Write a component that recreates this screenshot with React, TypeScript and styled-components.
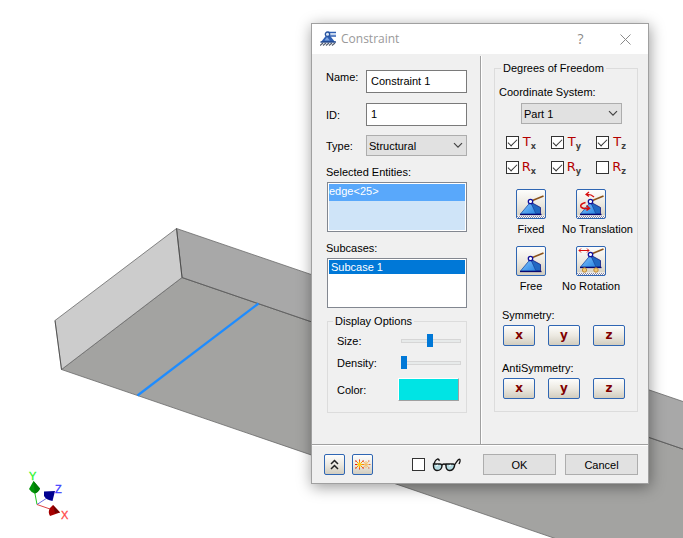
import React, { useState } from "react";
import styled, { createGlobalStyle, css } from "styled-components";

const GlobalStyle = createGlobalStyle`
  * { box-sizing: border-box; }
  body { margin: 0; background: #fff; }
  body, button, input, select {
    font-family: Tahoma, "Liberation Sans", sans-serif;
    font-size: 11px;
    line-height: 14px;
    color: #000;
  }
`;

const Stage = styled.main`
  position: relative;
  min-height: 100vh;
  display: flex;
  justify-content: flex-end;
  align-items: flex-start;
  padding: 23px 34px;
  overflow: hidden;
`;

const SceneSvg = styled.svg`
  position: absolute;
  inset: 0;
  width: 100%;
  height: 100%;
`;

const Dialog = styled.section`
  position: relative;
  background: #f0f0f0;
  border: 1px solid #a0a0a0;
  box-shadow: 1px 3px 14px rgba(0, 0, 0, 0.4);
`;

const TitleBar = styled.header`
  display: flex;
  align-items: center;
  height: 30px;
  padding: 0 0 0 8px;
  background: #fff;
`;

const Title = styled.h1`
  flex: 1;
  margin: 0 0 0 4px;
  font: 400 12px/16px "Open Sans", sans-serif;
  color: #999;
`;

const TitleButton = styled.button`
  width: 45px;
  height: 28px;
  padding: 0;
  border: 0;
  background: none;
  color: #8a8a8a;
  font: 400 14px/28px "Open Sans", sans-serif;

  svg { display: block; margin: auto; }
`;

const Columns = styled.div`
  display: flex;
  padding-top: 2px;
`;

const LeftColumn = styled.div`
  width: 168px;
  padding: 14px 13px 31px 14px;
`;

const RightColumn = styled.div`
  width: 166px;
  padding: 5px 10px 0 12px;
`;

const Divider = styled.div`
  width: 2px;
  border-left: 1px solid #a0a0a0;
  background: #fff;
`;

const Field = styled.div<{ $top?: boolean; $gap?: number }>`
  display: grid;
  grid-template-columns: 40px 1fr;
  align-items: ${(p) => (p.$top ? "start" : "center")};
  margin-top: ${(p) => p.$gap ?? 0}px;
`;

const TextInput = styled.input`
  width: 100%;
  height: 23px;
  padding: 0 4px 2px;
  border: 1px solid #7a7a7a;
  border-radius: 0;
  background: #fff;
`;

const SelectBox = styled.div<{ $indent?: boolean }>`
  position: relative;
  ${(p) => p.$indent && css`margin: 4px 11px 0 22px;`}

  svg {
    position: absolute;
    right: 4px;
    top: 7px;
    pointer-events: none;
  }
`;

const Select = styled.select`
  display: block;
  width: 100%;
  height: 21px;
  padding: 0 18px 0 2px;
  border: 1px solid #adadad;
  border-radius: 0;
  background: #e1e1e1;
  appearance: none;
`;

const SectionLabel = styled.div<{ $gap?: number }>`
  margin-top: ${(p) => p.$gap ?? 9}px;
  white-space: nowrap;
`;

const ListBox = styled.ul<{ $tint?: boolean }>`
  height: 50px;
  margin: 3px 0 0 1px;
  padding: 1px;
  list-style: none;
  border: 1px solid #828790;
  background: ${(p) => (p.$tint ? "#cfe4f8" : "#fff")};
  box-shadow: inset 0 0 0 1px #fff;
`;

const ListItem = styled.li<{ $tint?: boolean }>`
  height: ${(p) => (p.$tint ? 17 : 14)}px;
  padding-left: ${(p) => (p.$tint ? 0 : 2)}px;
  background: ${(p) => (p.$tint ? "#59a8fb" : "#0078d7")};
  color: #fff;
`;

const Group = styled.fieldset<{ $wide?: boolean }>`
  min-width: 0;
  margin: ${(p) => (p.$wide ? "0" : "6px 0 0 1px")};
  padding: ${(p) => (p.$wide ? "10px 4px 12px" : "6px 5px 11px 9px")};
  border: 1px solid #dcdcdc;
`;

const Legend = styled.legend<{ $wide?: boolean }>`
  margin-left: ${(p) => (p.$wide ? 2 : -4)}px;
  padding: 0 2px;
  white-space: nowrap;
`;

const OptionRow = styled.div`
  display: flex;
  justify-content: space-between;
  align-items: center;
  margin-bottom: 8px;
  &:last-child { margin-bottom: 0; }
`;

const Slider = styled.input`
  width: 60px;
  height: 14px;
  margin: 0;
  background: none;
  appearance: none;

  &::-webkit-slider-runnable-track {
    height: 4px;
    border: 1px solid #d6d6d6;
    background: #e7eaea;
  }
  &::-webkit-slider-thumb {
    appearance: none;
    width: 6px;
    height: 13px;
    margin: -6px -1px 0;
    background: #0078d7;
  }
`;

const ColorButton = styled.button`
  width: 61px;
  height: 23px;
  margin-right: 2px;
  padding: 0;
  border: 1px solid;
  border-color: #fff #a0a0a0 #a0a0a0 #fff;
  background: #00e4e4;
`;

const FreedomGrid = styled.div`
  display: grid;
  grid-template-columns: repeat(3, 45px);
  gap: 12px 0;
  margin: 12px 0 0 7px;
`;

const FreedomLabel = styled.label`
  display: flex;
  align-items: center;
  height: 13px;
  gap: 1px;
`;

const FreedomName = styled.span`
  width: 16px;
  display: flex;
  justify-content: flex-end;
  font: 400 13px/18px "DejaVu Sans", sans-serif;
  color: #b40000;

  sub {
    font: 700 9px/12px "DejaVu Sans Condensed", "DejaVu Sans", sans-serif;
    color: #404040;
    padding-top: 7px;
  }
`;

const Check = styled.input`
  flex: none;
  width: 13px;
  height: 13px;
  margin: 0;
  border: 1px solid #333;
  background: #fff;
  appearance: none;

  &:checked::before {
    content: "";
    display: block;
    width: 8px;
    height: 4px;
    margin: 2px 0 0 1px;
    border: solid #333;
    border-width: 0 0 1px 1px;
    transform: rotate(-45deg);
  }
`;

const PresetGrid = styled.div`
  display: grid;
  grid-template-columns: 46px auto;
  gap: 10px 0;
  margin: 15px 0 0 17px;
`;

const Preset = styled.div<{ $offset?: boolean }>`
  display: flex;
  flex-direction: column;
  align-items: ${(p) => (p.$offset ? "flex-start" : "center")};
  width: ${(p) => (p.$offset ? "auto" : "30px")};
  gap: 3px;
  white-space: nowrap;

  button { margin-left: ${(p) => (p.$offset ? 14 : 0)}px; }
`;

const gradientButton = css`
  display: flex;
  align-items: center;
  justify-content: center;
  padding: 0;
  border: 1px solid #2f66b3;
  border-radius: 2px;
  background: linear-gradient(#fdfdfc, #ece9e1 50%, #d2cdbf);
`;

const PresetButton = styled.button`
  ${gradientButton}
  width: 30px;
  height: 30px;
`;

const SmallButton = styled.button`
  ${gradientButton}
  width: 21px;
  height: 21px;
`;

const AxisRow = styled.div`
  display: flex;
  gap: 13px;
  margin: 3px 0 0 4px;
`;

const AxisButton = styled.button`
  ${gradientButton}
  width: 32px;
  height: 21px;
  padding-bottom: 2px;
  font: 700 12px/14px "DejaVu Sans", sans-serif;
  color: #800000;
`;

const Inset = styled.div`
  padding-left: 3px;
`;

const Footer = styled.footer`
  display: flex;
  align-items: center;
  padding: 9px 10px 8px 12px;
  border-top: 1px solid #a0a0a0;
  box-shadow: inset 0 1px #fff;
`;

const Preview = styled.label`
  display: flex;
  align-items: center;
  gap: 7px;
  margin: 0 22px 0 auto;
`;

const FooterTools = styled.div`
  display: flex;
  gap: 7px;
`;

const FooterActions = styled.div`
  display: flex;
  gap: 9px;
`;

const PushButton = styled.button`
  width: 73px;
  height: 21px;
  padding: 0;
  border: 1px solid #adadad;
  background: #e1e1e1;
`;

function Chevron() {
  return (
    <svg width="10" height="7" viewBox="0 0 10 7" fill="none" stroke="#444" strokeWidth="1.200" aria-hidden="true">
      <path d="M1 1.200 5 5.200 9 1.200" />
    </svg>
  );
}

function Scene() {
  return (
    <SceneSvg aria-label="Model view">
      <g stroke="#696969" strokeWidth="0.8" strokeLinejoin="round">
        <path d="M61.500 369.500 182 277.500 1182 620 1182 753Z" fill="#a3a3a1" />
        <path d="M176.500 228.500 182 277.500 1182 620 1182 572Z" fill="#a8a8a8" />
        <path d="M55 320.500 176.500 228.500 182 277.500 61.500 369.500Z" fill="#ccc" />
      </g>
      <path d="M55 320.500 61.500 369.500M176.500 228.500 182 277.500" stroke="#333" strokeWidth="0.6" />
      <path d="M182 277.500 1182 620" stroke="#555" strokeWidth="0.6" />
      <path d="M137.500 395.500 258.500 303.500" stroke="#1e8cff" strokeWidth="2.200" />
      <g fontFamily="Liberation Sans, sans-serif" fontSize="11">
        <path d="M37 504.500 34.500 491" stroke="#22c522" />
        <path d="M37 504.500 47 498" stroke="#6c6ce0" />
        <path d="M37 504.500 50 509" stroke="#d44" />
        <path d="M33.500 481 40 488.500Q39 492 34.500 493.500 31 492 29 489Z" fill="#009508" />
        <path d="M33.500 481 35 493.500Q38.500 492 40 488.500Z" fill="#007d05" />
        <path d="M44 491.500 55 491 52.500 501Q46 500 44 496Z" fill="#000090" />
        <path d="M53 505 60 512.500 50 516Q47.500 512 50 508Z" fill="#a50000" />
        <path d="M53 505 60 512.500 55 513Z" fill="#700000" />
        <text x="29" y="480" fill="#2cf52c" stroke="#2cf52c" strokeWidth="0.3">Y</text>
        <text x="55" y="493" fill="#4040ff" stroke="#4040ff" strokeWidth="0.3">Z</text>
        <text x="61" y="519" fill="#ff4848" stroke="#ff4848" strokeWidth="0.3">X</text>
      </g>
    </SceneSvg>
  );
}

function ConstraintLogo() {
  return (
    <svg width="17" height="16" viewBox="0 0 17 16" aria-hidden="true">
      <path d="M6.500 4 1 11H15L9.500 4Z" fill="#2f5fb2" />
      <path d="M7 6 4.500 9.500H10Z" fill="#7ba3e0" />
      <path d="M.5 11H16" stroke="#1f4488" strokeWidth="1.400" />
      <path d="M0 14.500 3 12M3 14.500 6 12M6 14.500 9 12M9 14.500 12 12M12 14.500 15 12" stroke="#555e70" strokeWidth="1.200" />
      <path d="M8 1.500H16M9 5H16" stroke="#2f5fb2" strokeWidth="1.600" />
      <path d="M9 3.200H16" stroke="#c4d6f0" strokeWidth="1.600" />
      <circle cx="7.500" cy="3.200" r="2.200" fill="#dce8f8" stroke="#27539f" strokeWidth="1.300" />
    </svg>
  );
}

type PresetKind = "fixed" | "pivot" | "free" | "roller";

function Ground() {
  return (
    <g>
      <path d="M1 26.500H29V29H1Z" fill="#fafafa" />
      <path d="M1 27.500H29" stroke="#8585a5" strokeDasharray="1 1" />
      <path d="M2 28.500H29" stroke="#8585a5" strokeDasharray="1 1" />
    </g>
  );
}

function PresetIcon({ kind }: { kind: PresetKind }) {
  const roller = kind === "roller";
  const id = `face-${kind}`;
  return (
    <svg width="28" height="28" viewBox="1 1 28 28" aria-hidden="true">
      <defs>
        <linearGradient id={id} x1="0" y1="0" x2="1" y2="1">
          <stop offset="0" stopColor="#88c8ff" />
          <stop offset="1" stopColor="#2b86e2" />
        </linearGradient>
      </defs>
      {kind !== "free" && <Ground />}
      <g transform={roller ? "translate(0 -4)" : undefined}>
        <path d="M14.500 13 24.500 18.500V25H19.500Z" fill="#2168c2" stroke="#101b80" strokeWidth="0.8" />
        <path d="M14.500 13 4.500 25H20Z" fill={`url(#${id})`} stroke="#1a50a8" strokeWidth="0.8" />
        <path d="M4 25.500H25.500" stroke="#080870" strokeWidth="1.300" />
        <path d="M16.500 11.500 27.500 7" stroke="#8b531b" strokeWidth="1.600" />
        <circle cx="14.500" cy="12.500" r="2.200" fill="#fff" stroke="#10109a" strokeWidth="1.300" />
      </g>
      {roller && (
        <g>
          <circle cx="8.500" cy="24" r="2.200" fill="#f0c978" stroke="#c08a35" />
          <circle cx="20" cy="24" r="2.200" fill="#f0c978" stroke="#c08a35" />
          <path d="M3 4.500H13M5 2.500 3 4.500 5 6.500M11 2.500 13 4.500 11 6.500" fill="none" stroke="#d80c0c" />
        </g>
      )}
      {kind === "pivot" && (
        <g fill="none" stroke="#d80c0c">
          <path d="M18 8Q15 5 10 5.500M13 3 10 5.500 13 7.500" strokeWidth="1.200" />
          <path d="M9.500 13.500Q3.500 15 5 18 6.500 20 13 19.500M10.500 16.500 13.500 19.500 10.500 21.500" strokeWidth="1.500" />
        </g>
      )}
    </svg>
  );
}

function Spark() {
  return (
    <svg width="17" height="13" viewBox="0 0 17 13" fill="none" aria-hidden="true">
      <path d="M9 6.500H15M12 3V10M9.500 3.500 14.500 9.500M14.500 3.500 9.500 9.500" stroke="#f5bd69" />
      <path d="M1 6.500H10M5.500 2V11M2 3 9 10M9 3 2 10" stroke="#ff8a00" />
      <path d="M1 3H2.500M1 10H2.500M1 6.500H3M5 2H6M5 11H6M8.500 3H10M8.500 10H10" stroke="#e01818" />
      <circle cx="5.500" cy="6.500" r="2" fill="#ffd21c" />
      <path d="M14 3H15.500M15 6.500H16.500M14 10H15.500" stroke="#df6d4b" />
    </svg>
  );
}

function Glasses() {
  return (
    <svg width="29" height="14" viewBox="0 0 29 14" fill="none" stroke="#151515" aria-hidden="true">
      <path d="M1.500 6H8Q10 6 10 8 9.500 12.500 5 12.500 1.500 12 1.500 8Z" fill="#b5dbe2" strokeWidth="1.400" />
      <path d="M14 6H21Q23 6 22.500 8 21.500 12.500 17.500 12.500 14 12 14 8Z" fill="#b5dbe2" strokeWidth="1.400" />
      <path d="M10 7Q12 5 14 7" strokeWidth="1.500" />
      <path d="M2 6Q3 2 5.500 1 7.500 1 7 3M22.500 7Q25 3 26.500 1.500 28.500 .5 28 3.500L27 6" strokeWidth="1.300" />
      <path d="M4 8 6 7M17 8 19 7" stroke="#fff" />
    </svg>
  );
}

function Freedom({ letter, axis, initial }: { letter: string; axis: string; initial: boolean }) {
  const [on, setOn] = useState(initial);
  return (
    <FreedomLabel>
      <Check type="checkbox" checked={on} onChange={() => setOn(!on)} />
      <FreedomName>{letter}<sub>{axis}</sub></FreedomName>
    </FreedomLabel>
  );
}

const presets: { kind: PresetKind; label: string; offset: boolean }[] = [
  { kind: "fixed", label: "Fixed", offset: false },
  { kind: "pivot", label: "No Translation", offset: true },
  { kind: "free", label: "Free", offset: false },
  { kind: "roller", label: "No Rotation", offset: true },
];

const axes = ["x", "y", "z"];

function AxisButtons({ name }: { name: string }) {
  return (
    <AxisRow role="group" aria-label={name}>
      {axes.map((a) => <AxisButton key={a}>{a}</AxisButton>)}
    </AxisRow>
  );
}

export default function App() {
  return (
    <>
      <GlobalStyle />
      <Stage>
        <Scene />
        <Dialog role="dialog" aria-labelledby="dialog-title">
          <TitleBar>
            <ConstraintLogo />
            <Title id="dialog-title">Constraint</Title>
            <TitleButton aria-label="Help">?</TitleButton>
            <TitleButton aria-label="Close">
              <svg width="11" height="11" viewBox="0 0 11 11" stroke="#8a8a8a"><path d="M.5 .5 10.500 10.500M10.500 .5 .5 10.500" /></svg>
            </TitleButton>
          </TitleBar>
          <Columns>
            <LeftColumn>
              <Field $top>
                <label htmlFor="name">Name:</label>
                <TextInput id="name" defaultValue="Constraint 1" />
              </Field>
              <Field $gap={10}>
                <label htmlFor="cid">ID:</label>
                <TextInput id="cid" defaultValue="1" />
              </Field>
              <Field $gap={9}>
                <label htmlFor="type">Type:</label>
                <SelectBox>
                  <Select id="type"><option>Structural</option></Select>
                  <Chevron />
                </SelectBox>
              </Field>
              <SectionLabel id="entities">Selected Entities:</SectionLabel>
              <ListBox $tint role="listbox" aria-labelledby="entities">
                <ListItem $tint role="option" aria-selected="true">edge&lt;25&gt;</ListItem>
              </ListBox>
              <SectionLabel id="subcases">Subcases:</SectionLabel>
              <ListBox role="listbox" aria-labelledby="subcases">
                <ListItem role="option" aria-selected="true">Subcase 1</ListItem>
              </ListBox>
              <Group>
                <Legend>Display Options</Legend>
                <OptionRow>
                  <label htmlFor="size">Size:</label>
                  <Slider id="size" type="range" defaultValue={50} />
                </OptionRow>
                <OptionRow>
                  <label htmlFor="density">Density:</label>
                  <Slider id="density" type="range" defaultValue={0} />
                </OptionRow>
                <OptionRow>
                  <label htmlFor="color">Color:</label>
                  <ColorButton id="color" />
                </OptionRow>
              </Group>
            </LeftColumn>
            <Divider />
            <RightColumn>
              <Group $wide>
                <Legend $wide>Degrees of Freedom</Legend>
                <label htmlFor="system">Coordinate System:</label>
                <SelectBox $indent>
                  <Select id="system"><option>Part 1</option></Select>
                  <Chevron />
                </SelectBox>
                <FreedomGrid>
                  {["T", "R"].map((l) =>
                    axes.map((a) => <Freedom key={l + a} letter={l} axis={a} initial={l + a !== "Rz"} />)
                  )}
                </FreedomGrid>
                <PresetGrid>
                  {presets.map((p) => (
                    <Preset key={p.kind} $offset={p.offset}>
                      <PresetButton aria-label={p.label}><PresetIcon kind={p.kind} /></PresetButton>
                      <span>{p.label}</span>
                    </Preset>
                  ))}
                </PresetGrid>
                <Inset>
                  <SectionLabel $gap={15}>Symmetry:</SectionLabel>
                </Inset>
                <AxisButtons name="Symmetry" />
                <Inset>
                  <SectionLabel $gap={15}>AntiSymmetry:</SectionLabel>
                </Inset>
                <AxisButtons name="AntiSymmetry" />
              </Group>
            </RightColumn>
          </Columns>
          <Footer>
            <FooterTools>
              <SmallButton aria-label="Collapse">
                <svg width="11" height="13" viewBox="0 0 11 13" fill="none" stroke="#222" strokeWidth="1.500"><path d="M2 6 5.500 2.500 9 6M2 11 5.500 7.500 9 11" /></svg>
              </SmallButton>
              <SmallButton aria-label="Highlight"><Spark /></SmallButton>
            </FooterTools>
            <Preview aria-label="Preview">
              <Check type="checkbox" aria-label="Preview" />
              <Glasses />
            </Preview>
            <FooterActions>
              <PushButton>OK</PushButton>
              <PushButton>Cancel</PushButton>
            </FooterActions>
          </Footer>
        </Dialog>
      </Stage>
    </>
  );
}
